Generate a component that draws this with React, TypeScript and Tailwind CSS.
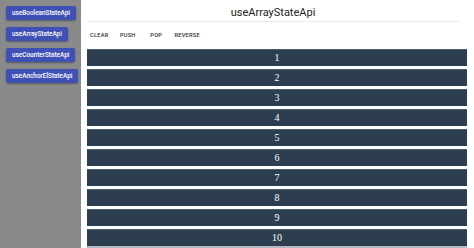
import React from "react";

const navItems = ["useBooleanStateApi", "useArrayStateApi", "useCounterStateApi", "useAnchorElStateApi"];
const actions = ["Clear", "Push", "Pop", "Reverse"];
const rows = [1, 2, 3, 4, 5, 6, 7, 8, 9, 10];

export default function App() {
  return (
    <div className="flex min-h-screen w-[474px] overflow-hidden" style={{ fontFamily: "Roboto, 'Liberation Sans', sans-serif" }}>
      <aside className="w-[81px] shrink-0 bg-[#8a8a8a] pt-[6px] pl-[6px]">
        <div className="flex flex-col items-start gap-[7px]">
          {navItems.map((n) => (
            <button
              key={n}
              className="h-[14px] rounded-[2px] bg-[#3f51b5] px-[6px] text-[6.4px] font-medium leading-[14px] text-white shadow-[0_1px_2px_rgba(0,0,0,0.35)]"
            >
              {n}
            </button>
          ))}
        </div>
      </aside>
      <main className="flex-1 bg-white">
        <header className="ml-[5px] mr-[14px] flex h-[22px] items-center justify-center border-b border-[#ececec] pt-[4px]">
          <h1 className="text-[11px] leading-none text-[#222]">useArrayStateApi</h1>
        </header>
        <div className="flex h-[26px] items-center pl-[4px] pt-[1px]">
          {actions.map((a) => (
            <button
              key={a}
              className="min-w-[28.5px] px-[4px] text-center text-[5.7px] font-medium uppercase tracking-[0.2px] text-[#333]"
            >
              {a}
            </button>
          ))}
        </div>
        <div className="ml-[6px] mr-[7px] mt-[1px] flex flex-col gap-[3px]">
          {rows.map((r) => (
            <div
              key={r}
              className="flex h-[17px] items-center justify-center border-t border-[#4a5b6e] bg-[#2c3e50] text-[10px] leading-none text-white"
              style={{ fontFamily: "'Liberation Serif', serif" }}
            >
              {r}
            </div>
          ))}
          <div className="-mt-[3px] h-[10px] bg-[#b3bcc6]" />
        </div>
      </main>
    </div>
  );
}
